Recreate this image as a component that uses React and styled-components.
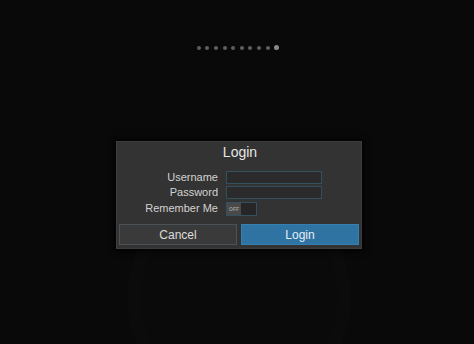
import React from 'react';
import styled, { createGlobalStyle } from 'styled-components';

const Global = createGlobalStyle`
  html, body { margin: 0; padding: 0; background: #090909; }
  body { font-family: "Liberation Sans", Arial, sans-serif; }
`;

const Screen = styled.div`
  position: relative;
  width: 474px;
  height: 344px;
  overflow: hidden;
  background: #090909;
  display: flex;
  flex-direction: column;
  align-items: center;
`;

// faint watermark behind the dialog
const Backdrop = styled.svg`
  position: absolute;
  left: 122px;
  top: 180px;
  width: 234px;
  height: 234px;
  z-index: 0;
`;

const Dots = styled.div`
  position: relative;
  z-index: 1;
  margin-top: 45px;
  margin-left: 2px;
  display: flex;
  align-items: center;
  gap: 4.6px;
`;

const Dot = styled.span`
  width: ${p => (p.$big ? 5 : 4)}px;
  height: ${p => (p.$big ? 5 : 4)}px;
  border-radius: 50%;
  background: ${p => (p.$big ? '#8a8a8a' : '#5e5e5e')};
`;

const Dialog = styled.div`
  position: relative;
  z-index: 1;
  margin-top: 91px;
  margin-left: 4px;
  width: 240px;
  background: #333333;
  border: 1px solid #3d3d3d;
  box-shadow: 0 0 6px 2px rgba(0, 0, 0, 0.8);
  padding: 1px 2px 3px;
  display: flex;
  flex-direction: column;
`;

const Title = styled.div`
  color: #e6e6e6;
  font-size: 14px;
  text-align: center;
  line-height: 18px;
  margin: 0 0 10px;
  padding-left: 2px;
`;

const Form = styled.div`
  display: grid;
  grid-template-columns: 99px 96px;
  column-gap: 8px;
  row-gap: 2px;
  align-items: center;
`;

const Label = styled.label`
  color: #d2d2d2;
  font-size: 11px;
  line-height: 13px;
  text-align: right;
`;

const Input = styled.div`
  height: 11px;
  background: #2b2b2b;
  border: 1px solid #33505e;
`;

const Toggle = styled.div`
  width: 29px;
  height: 12px;
  border: 1px solid #33505e;
  background: #262626;
  display: flex;
  margin-top: 1px;
`;

const ToggleKnob = styled.span`
  width: 14px;
  height: 12px;
  background: #4a4a4a;
  color: #9a9a9a;
  font-size: 5px;
  font-weight: bold;
  line-height: 12px;
  text-align: center;
`;

const Buttons = styled.div`
  display: grid;
  grid-template-columns: 1fr 1fr;
  gap: 4px;
  margin-top: 8px;
`;

const Button = styled.button`
  height: 21px;
  padding: 0;
  font-family: inherit;
  font-size: 12px;
  color: ${p => (p.$primary ? '#e4eef6' : '#dcdcdc')};
  background: ${p => (p.$primary ? '#2f73a3' : '#3a3a3a')};
  border: 1px solid ${p => (p.$primary ? '#3580b3' : '#4a5258')};
`;

export default function App() {
  return (
    <>
      <Global />
      <Screen>
        <Backdrop viewBox="0 0 100 100">
          <circle cx="50" cy="50" r="48" fill="#0b0b0b" />
          <circle cx="50" cy="50" r="42" fill="#0a0a0a" />
        </Backdrop>
        <Dots>
          {Array.from({ length: 10 }).map((_, i) => (
            <Dot key={i} $big={i === 9} />
          ))}
        </Dots>
        <Dialog>
          <Title>Login</Title>
          <Form>
            <Label>Username</Label>
            <Input />
            <Label>Password</Label>
            <Input />
            <Label>Remember Me</Label>
            <Toggle>
              <ToggleKnob>OFF</ToggleKnob>
            </Toggle>
          </Form>
          <Buttons>
            <Button>Cancel</Button>
            <Button $primary>Login</Button>
          </Buttons>
        </Dialog>
      </Screen>
    </>
  );
}
